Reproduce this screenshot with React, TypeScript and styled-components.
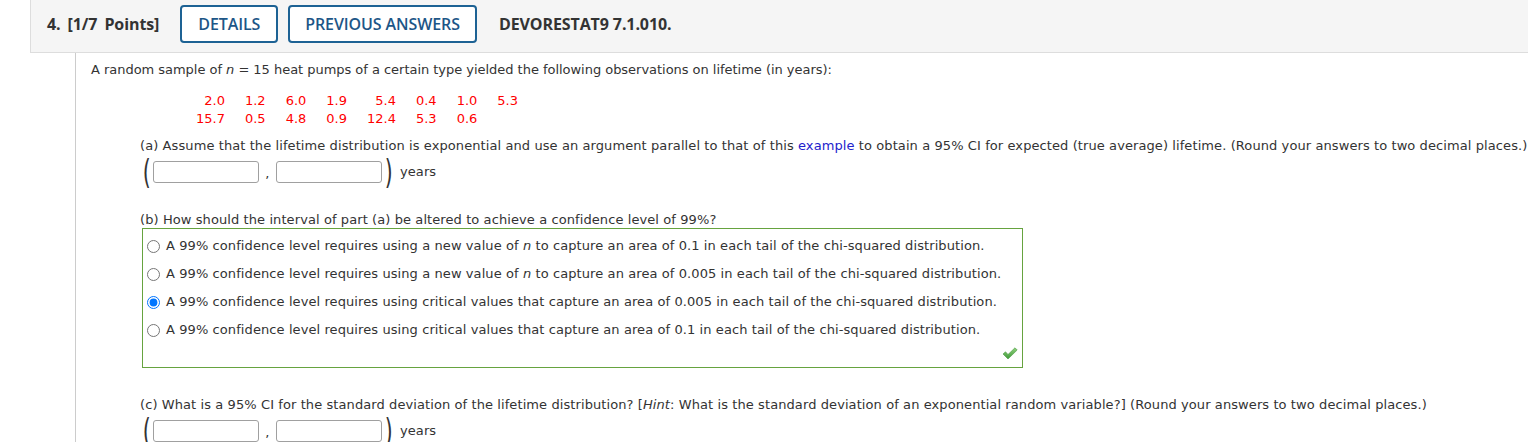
import React, { ReactElement } from "react";
import styled, { createGlobalStyle } from "styled-components";

const GlobalStyle = createGlobalStyle`
    body {
        margin: 0;
        background: #ffffff;
        font-family: "DejaVu Sans", Verdana, sans-serif;
        color: #333333;
    }
`;

const Page = styled.div`
    padding-left: 30px;
    width: 1498px;
    overflow: hidden;
`;

const Header = styled.div`
    display: flex;
    align-items: center;
    height: 53px;
    box-sizing: border-box;
    padding: 0 0 4px 16px;
    background: #f5f5f5;
    border-left: 1px solid #dddddd;
    border-bottom: 1px solid #dddddd;
    font-family: "Open Sans", sans-serif;
    font-size: 16px;
    font-weight: 700;
    letter-spacing: -0.1px;
    color: #333333;
`;

const Points = styled.span`
    margin-right: 21px;
    word-spacing: 3px;
`;

const HeaderButton = styled.button<{ $pad: number }>`
    height: 38px;
    padding: 0 ${(p) => p.$pad}px;
    margin-right: 10px;
    background: #ffffff;
    border: 2px solid #1d6294;
    border-radius: 4px;
    font-family: "Open Sans", sans-serif;
    font-size: 16px;
    font-weight: 600;
    letter-spacing: -0.1px;
    color: #1d5687;
`;

const Code = styled.span`
    margin-left: 12px;
`;

const Body = styled.div`
    margin-left: 45px;
    border-left: 1px solid #cccccc;
    padding: 8px 0 20px 15px;
    font-size: 13px;
    line-height: 18px;
`;

const Intro = styled.p`
    margin: 0;
    letter-spacing: -0.03px;
`;

const DataTable = styled.table`
    margin: 13px 0 0 95px;
    border-collapse: collapse;
    color: #ff0000;

    td {
        padding: 0 10px;
        text-align: right;
        line-height: 18px;
    }
`;

const Part = styled.div`
    margin-left: 49px;
    letter-spacing: 0.09px;
`;

const Question = styled.p<{ $top: number }>`
    margin: ${(p) => p.$top}px 0 0 0;
`;

const Link = styled.span`
    color: #2222cc;
`;

const AnswerRow = styled.div`
    display: flex;
    align-items: center;
    height: 28px;
    margin-top: 3px;
`;

const Paren = styled.span`
    font-size: 34px;
    font-weight: 400;
    line-height: 28px;
    color: #333333;
    transform: scaleX(0.6);
`;

const Field = styled.input`
    width: 106px;
    height: 22px;
    box-sizing: border-box;
    border: 1px solid #a0a0a0;
    border-radius: 3px;
    margin: 0;
`;

const Comma = styled.span`
    margin: 4px 6px 0 6px;
`;

const Unit = styled.span`
    margin-left: 5px;
`;

const ChoiceBox = styled.div`
    position: relative;
    width: 881px;
    height: 140px;
    box-sizing: border-box;
    margin: -1px 0 0 2px;
    padding: 3px 0 0 4px;
    border: 1px solid #66a33f;
`;

const Choice = styled.label`
    display: flex;
    align-items: center;
    height: 28px;
`;

const Radio = styled.input`
    width: 13px;
    height: 13px;
    margin: 0 6px 0 0;
`;

const Check = styled.svg`
    position: absolute;
    right: 4px;
    bottom: 7px;
`;

const choices = [
    <>A 99% confidence level requires using a new value of <i>n</i> to capture an area of 0.1 in each tail of the chi-squared distribution.</>,
    <>A 99% confidence level requires using a new value of <i>n</i> to capture an area of 0.005 in each tail of the chi-squared distribution.</>,
    <>A 99% confidence level requires using critical values that capture an area of 0.005 in each tail of the chi-squared distribution.</>,
    <>A 99% confidence level requires using critical values that capture an area of 0.1 in each tail of the chi-squared distribution.</>,
];

const data = [
    ["2.0", "1.2", "6.0", "1.9", "5.4", "0.4", "1.0", "5.3"],
    ["15.7", "0.5", "4.8", "0.9", "12.4", "5.3", "0.6", ""],
];

function Interval(): ReactElement {
    return (
        <AnswerRow>
            <Paren>(</Paren>
            <Field type="text" />
            <Comma>,</Comma>
            <Field type="text" />
            <Paren>)</Paren>
            <Unit>years</Unit>
        </AnswerRow>
    );
}

export default function App(): ReactElement {
    return (
        <Page>
            <GlobalStyle />
            <Header>
                <Points>4. [1/7 Points]</Points>
                <HeaderButton $pad={16}>DETAILS</HeaderButton>
                <HeaderButton $pad={15}>PREVIOUS ANSWERS</HeaderButton>
                <Code>DEVORESTAT9 7.1.010.</Code>
            </Header>
            <Body>
                <Intro>
                    A random sample of <i>n</i> = 15 heat pumps of a certain type yielded the following observations on lifetime (in years):
                </Intro>
                <DataTable>
                    <tbody>
                        {data.map((row, r) => (
                            <tr key={r}>
                                {row.map((v, c) => <td key={c}>{v}</td>)}
                            </tr>
                        ))}
                    </tbody>
                </DataTable>
                <Part>
                    <Question $top={9}>
                        (a) Assume that the lifetime distribution is exponential and use an argument parallel to that of this <Link>example</Link> to obtain a 95% CI for expected (true average) lifetime. (Round your answers to two decimal places.)
                    </Question>
                    <Interval />
                    <Question $top={25}>
                        (b) How should the interval of part (a) be altered to achieve a confidence level of 99%?
                    </Question>
                    <ChoiceBox>
                        {choices.map((text, i) => (
                            <Choice key={i}>
                                <Radio type="radio" name="b" defaultChecked={i === 2} />
                                <span>{text}</span>
                            </Choice>
                        ))}
                        <Check width="16" height="13" viewBox="0 0 16 13">
                            <defs>
                                <linearGradient id="ck" x1="0" y1="0" x2="0" y2="1">
                                    <stop offset="0" stopColor="#8fd07a" />
                                    <stop offset="1" stopColor="#3f9a3a" />
                                </linearGradient>
                            </defs>
                            <path d="M1 7 L3.5 4.8 L6 7.5 L13 0.8 L15.2 3 L6 12 Z" fill="url(#ck)" stroke="#4a9a43" strokeWidth="0.6" />
                        </Check>
                    </ChoiceBox>
                    <Question $top={28}>
                        (c) What is a 95% CI for the standard deviation of the lifetime distribution? [<i>Hint</i>: What is the standard deviation of an exponential random variable?] (Round your answers to two decimal places.)
                    </Question>
                    <Interval />
                </Part>
            </Body>
        </Page>
    );
}
